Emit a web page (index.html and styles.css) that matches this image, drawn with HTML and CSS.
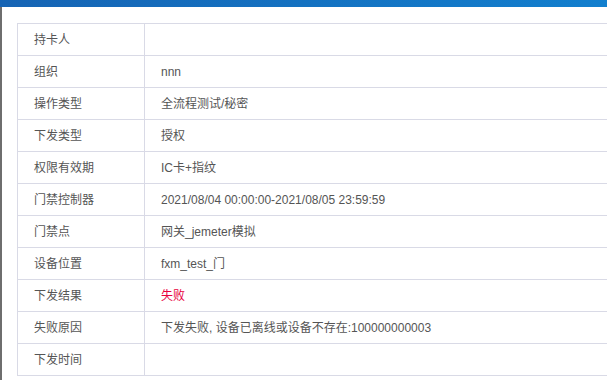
FILE: index.html
```html
<!DOCTYPE html>
<html lang="zh-CN">
<head>
    <meta charset="UTF-8">
    <meta name="viewport" content="width=device-width, initial-scale=1.0">
    <title>下发详情</title>
    <link rel="stylesheet" href="styles.css">
</head>
<body>
    <div class="top-bar"></div>
    <div class="content">
        <table class="detail-table">
            <tr><td class="label">持卡人</td><td class="value"></td></tr>
            <tr><td class="label">组织</td><td class="value">nnn</td></tr>
            <tr><td class="label">操作类型</td><td class="value">全流程测试/秘密</td></tr>
            <tr><td class="label">下发类型</td><td class="value">授权</td></tr>
            <tr><td class="label">权限有效期</td><td class="value">IC卡+指纹</td></tr>
            <tr><td class="label">门禁控制器</td><td class="value">2021/08/04 00:00:00-2021/08/05 23:59:59</td></tr>
            <tr><td class="label">门禁点</td><td class="value">网关_jemeter模拟</td></tr>
            <tr><td class="label">设备位置</td><td class="value">fxm_test_门</td></tr>
            <tr><td class="label">下发结果</td><td class="value fail">失败</td></tr>
            <tr><td class="label">失败原因</td><td class="value">下发失败, 设备已离线或设备不存在:100000000003</td></tr>
            <tr><td class="label">下发时间</td><td class="value"></td></tr>
        </table>
    </div>
</body>
</html>
```

FILE: styles.css
```css
html, body {
    margin: 0;
    padding: 0;
    background-color: #fff;
    overflow: hidden;
}
body {
    font-family: "Liberation Sans", "Noto Sans CJK SC", sans-serif;
    font-size: 12px;
    color: #555;
}
.top-bar {
    height: 7px;
    background: linear-gradient(90deg, #1664b4, #127fce);
}
.content {
    border-left: 2px solid #6e6e6e;
    padding: 16px 0 0 15px;
    height: calc(100vh - 23px);
}
.detail-table {
    border-collapse: collapse;
    width: 100%;
}
.detail-table td {
    border: 1px solid #d9dae6;
    height: 32px;
    padding: 1px 0 0 16px;
    line-height: 16px;
    box-sizing: border-box;
}
.detail-table .value {
    border-right: none;
}
.detail-table .label {
    width: 127px;
}
.detail-table .fail {
    color: #e8003d;
}
```
